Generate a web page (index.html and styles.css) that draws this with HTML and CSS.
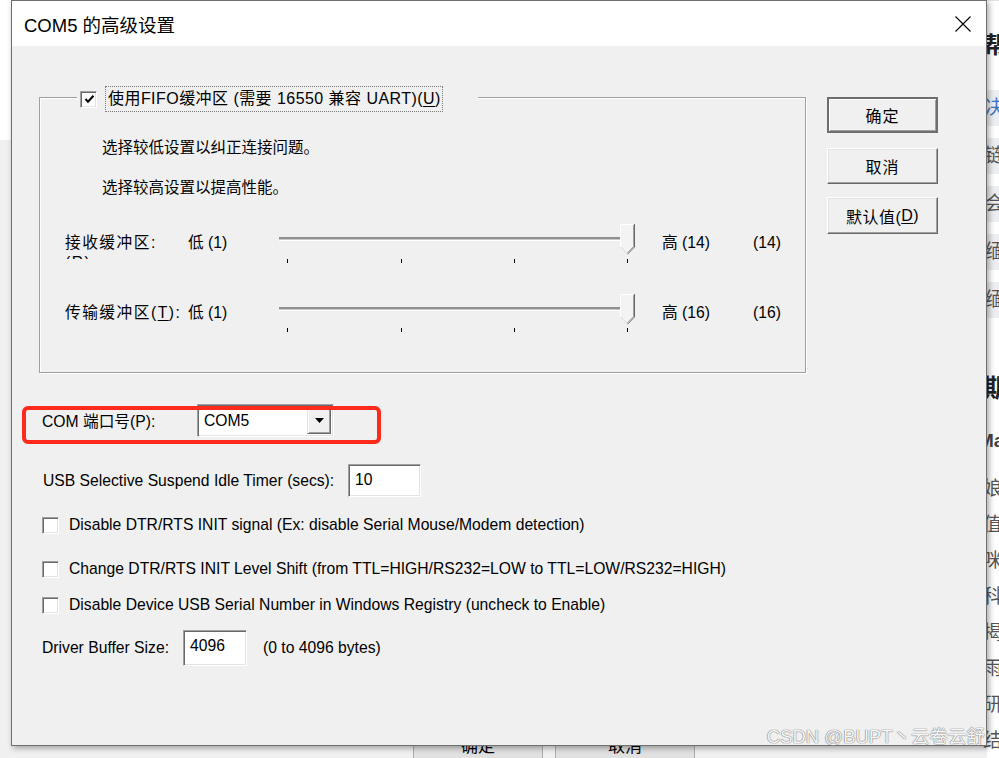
FILE: index.html
```html
<!DOCTYPE html>
<html lang="zh-CN">
<head>
<meta charset="utf-8">
<title>COM5 的高级设置</title>
<link rel="stylesheet" href="styles.css">
</head>
<body>
<div class="screen">
  <div class="behind">
    <div class="behind-main">
      <div class="behind-spacer"></div>
      <div class="behind-buttons">
        <div class="bbtn bbtn-ok">确定</div>
        <div class="bbtn bbtn-cancel">取消</div>
      </div>
    </div>
    <div class="behind-side">
      <div class="side-top"></div>
      <div class="side-h1">帮</div>
      <div class="side-band blue">决</div>
      <div class="side-band">链</div>
      <div class="side-band">会</div>
      <div class="side-band">缅</div>
      <div class="side-band">缅</div>
      <div class="side-sep"></div>
      <div class="side-h2">期</div>
      <div class="side-h3">Ma</div>
      <div class="side-lines">
        <div>娘</div><div>值</div><div>咪</div><div>科</div><div>揭</div><div>雨</div><div>研</div><div>结</div>
      </div>
    </div>
  </div>

  <div class="dialog">
    <div class="titlebar">
      <span class="title">COM5 的高级设置</span>
      <span class="close">
        <svg width="16" height="16" viewBox="0 0 16 16"><path d="M0.5 0.5 L15.5 15.5 M15.5 0.5 L0.5 15.5" stroke="#000" stroke-width="1.1" fill="none"/></svg>
      </span>
    </div>
    <div class="client">
      <div class="top-row">
        <div class="group">
          <div class="legend">
            <span class="check checked">
              <svg width="11" height="11" viewBox="0 0 11 11"><path d="M1.5 5 L4 7.8 L9.5 1.8" stroke="#000" stroke-width="2" fill="none"/></svg>
            </span>
            <span class="legend-text">使用FIFO缓冲区 (需要 16550 兼容 UART)(<u>U</u>)</span>
          </div>
          <div class="hint hint1">选择较低设置以纠正连接问题。</div>
          <div class="hint hint2">选择较高设置以提高性能。</div>
          <div class="slider-row row1">
            <div class="s-label clip"><div>接收缓冲区:</div><div>(<u>R</u>)</div></div>
            <div class="s-low">低 (1)</div>
            <svg class="slider" width="358" height="41" viewBox="0 0 358 41">
              <rect x="0" y="14" width="345" height="2" fill="#8f8f8f"/>
              <rect x="0" y="16" width="345" height="1" fill="#c8c8c8"/>
              <rect x="0" y="17" width="345" height="1" fill="#ffffff"/>
              <rect x="8" y="36" width="1" height="4" fill="#000"/>
              <rect x="122" y="36" width="1" height="4" fill="#000"/>
              <rect x="235" y="36" width="1" height="4" fill="#000"/>
              <rect x="348" y="36" width="1" height="4" fill="#000"/>
              <polygon points="341,1 356,1 356,24 348.5,31.5 341,24" fill="#f3f3f3"/>
              <polyline points="341.5,24 341.5,1.5 355.5,1.5" stroke="#fff" fill="none"/>
              <polyline points="341.5,24 348.5,31" stroke="#d8d8d8" fill="none"/>
              <polyline points="354.5,2 354.5,23.6 348.5,29.6" stroke="#a0a0a0" fill="none"/>
              <polyline points="355.5,1 355.5,24 348.5,31.2" stroke="#696969" fill="none"/>
            </svg>
            <div class="s-high">高 (14)</div>
            <div class="s-cur">(14)</div>
          </div>
          <div class="slider-row row2">
            <div class="s-label">传输缓冲区(<u>T</u>):</div>
            <div class="s-low">低 (1)</div>
            <svg class="slider" width="358" height="41" viewBox="0 0 358 41">
              <rect x="0" y="14" width="345" height="2" fill="#8f8f8f"/>
              <rect x="0" y="16" width="345" height="1" fill="#c8c8c8"/>
              <rect x="0" y="17" width="345" height="1" fill="#ffffff"/>
              <rect x="8" y="35" width="1" height="4" fill="#000"/>
              <rect x="122" y="35" width="1" height="4" fill="#000"/>
              <rect x="235" y="35" width="1" height="4" fill="#000"/>
              <rect x="348" y="35" width="1" height="4" fill="#000"/>
              <polygon points="341,1 356,1 356,24 348.5,31.5 341,24" fill="#f3f3f3"/>
              <polyline points="341.5,24 341.5,1.5 355.5,1.5" stroke="#fff" fill="none"/>
              <polyline points="341.5,24 348.5,31" stroke="#d8d8d8" fill="none"/>
              <polyline points="354.5,2 354.5,23.6 348.5,29.6" stroke="#a0a0a0" fill="none"/>
              <polyline points="355.5,1 355.5,24 348.5,31.2" stroke="#696969" fill="none"/>
            </svg>
            <div class="s-high">高 (16)</div>
            <div class="s-cur">(16)</div>
          </div>
        </div>
        <div class="buttons">
          <div class="btn btn-default">确定</div>
          <div class="btn btn-cancel">取消</div>
          <div class="btn btn-reset">默认值(<u>D</u>)</div>
        </div>
      </div>

      <div class="com-row">
        <div class="com-label">COM 端口号(P):</div>
        <div class="combo">
          <div class="combo-value">COM5</div>
          <div class="combo-arrow">
            <svg width="9" height="5" viewBox="0 0 9 5"><path d="M0 0 H9 L4.5 5 Z" fill="#000"/></svg>
          </div>
        </div>
      </div>

      <div class="usb-row">
        <div class="usb-label">USB Selective Suspend Idle Timer (secs):</div>
        <div class="field field-usb">10</div>
      </div>

      <div class="cb-row cb1">
        <span class="check"></span>
        <span class="cb-text">Disable DTR/RTS INIT signal (Ex: disable Serial Mouse/Modem detection)</span>
      </div>
      <div class="cb-row cb2">
        <span class="check"></span>
        <span class="cb-text">Change DTR/RTS INIT Level Shift (from TTL=HIGH/RS232=LOW to TTL=LOW/RS232=HIGH)</span>
      </div>
      <div class="cb-row cb3">
        <span class="check"></span>
        <span class="cb-text">Disable Device USB Serial Number in Windows Registry (uncheck to Enable)</span>
      </div>

      <div class="buf-row">
        <div class="buf-label">Driver Buffer Size:</div>
        <div class="field field-buf">4096</div>
        <div class="buf-note">(0 to 4096 bytes)</div>
      </div>
    </div>
  </div>

  <div class="red-mark"></div>
  <div class="watermark">CSDN @BUPT丶云卷云舒</div>
</div>
</body>
</html>
```

FILE: styles.css
```css
* { box-sizing: border-box; }

html, body {
  margin: 0;
  padding: 0;
  background: #ffffff;
}

body {
  font-family: "Liberation Sans", "Noto Sans CJK SC", sans-serif;
  font-size: 15.7px;
  color: #000;
}

u { text-decoration: underline; text-underline-offset: 2px; }

.screen {
  position: relative;
  width: 999px;
  height: 758px;
  overflow: hidden;
}

/* ---------- background (behind the dialog) ---------- */
.behind {
  display: flex;
  height: 758px;
}

.behind-main {
  width: 987px;
  display: flex;
  flex-direction: column;
  background: linear-gradient(#ffffff 0, #ffffff 140px, #f0f0f0 140px);
}

.behind-spacer { flex: 1; }

.behind-buttons {
  height: 28px;
  display: flex;
  gap: 12px;
  padding-left: 413px;
  background: #f0f0f0;
}

.bbtn {
  height: 34px;
  line-height: 32px;
  text-align: center;
  font-size: 17px;
  background: #e1e1e1;
  border: 1px solid #adadad;
}

.bbtn-ok { width: 130px; }
.bbtn-cancel { width: 140px; }

.behind-side {
  width: 12px;
  background: #ffffff;
  display: flex;
  flex-direction: column;
  font-size: 19px;
  color: #555;
  white-space: nowrap;
}

.side-top {
  height: 24px;
  border-bottom: 1px solid #e2e2e2;
}

.side-h1 {
  margin-top: 30px;
  height: 28px;
  line-height: 28px;
  font-size: 23px;
  font-weight: bold;
  color: #222;
  margin-left: -3px;
}

.side-h1 + .side-band { margin-top: 31px; }

.side-band {
  height: 36px;
  line-height: 36px;
  margin-bottom: 12px;
  background: #eceef1;
  margin-left: -2px;
}

.side-band.blue { color: #3a73c4; }

.side-sep {
  margin-top: 19px;
  height: 1px;
  background: #e2e2e2;
}

.side-h2 {
  margin-top: 24px;
  height: 30px;
  line-height: 30px;
  font-size: 25px;
  font-weight: bold;
  color: #222;
  margin-left: -4px;
}

.side-h3 {
  margin-top: 28px;
  height: 20px;
  line-height: 20px;
  font-size: 19px;
  font-weight: bold;
  color: #444;
  margin-left: -9px;
}

.side-lines {
  margin-top: 20px;
  line-height: 36px;
  margin-left: -4px;
}

/* ---------- dialog ---------- */
.dialog {
  position: absolute;
  left: 11px;
  top: 0;
  width: 976px;
  height: 746px;
  background: #f0f0f0;
  border: 1px solid #6f6f6f;
  box-shadow: 2px 2px 6px rgba(0, 0, 0, 0.35);
}

.titlebar {
  height: 45px;
  background: #ffffff;
  display: flex;
  align-items: center;
  justify-content: space-between;
  padding-left: 12px;
  padding-right: 15px;
}

.title {
  font-size: 18.5px;
}

.close {
  display: flex;
  padding-top: 1px;
}

.client {
  display: flex;
  flex-direction: column;
}

.top-row {
  display: flex;
  margin-top: 51px;
  margin-left: 27px;
}

/* group box */
.group {
  width: 767px;
  height: 276px;
  border: 1px solid #a0a0a0;
  box-shadow: inset 1px 1px #ffffff, 1px 1px #ffffff;
  display: flex;
  flex-direction: column;
}

.legend {
  margin-top: -12px;
  margin-left: 37px;
  align-self: flex-start;
  height: 26px;
  display: flex;
  align-items: center;
  gap: 8px;
  padding: 0 35px 0 3px;
  background: #f0f0f0;
}

.check {
  width: 17px;
  height: 17px;
  flex: none;
  background: #ffffff;
  border: 1px solid;
  border-color: #a0a0a0 #ffffff #ffffff #a0a0a0;
  box-shadow: inset 1px 1px #696969, inset -1px -1px #e3e3e3;
  display: flex;
  align-items: center;
  justify-content: center;
}

.check.checked svg { margin-left: 1px; margin-top: 1px; }

.legend-text {
  height: 26px;
  line-height: 24px;
  padding: 0 1px 0 2px;
  border: 1px dotted #7a7a7a;
  white-space: nowrap;
  font-size: 16px;
  letter-spacing: 0.45px;
}

.hint {
  margin-left: 62px;
  line-height: 20px;
  height: 20px;
  font-size: 15.5px;
}

.hint1 { margin-top: 26px; }
.hint2 { margin-top: 20px; }

.slider-row {
  display: flex;
  align-items: flex-start;
  height: 41px;
  white-space: nowrap;
}

.row1 { margin-top: 25px; }
.row2 { margin-top: 29px; }

.s-label {
  margin-left: 25px;
  width: 123px;
  padding-top: 10px;
  line-height: 20px;
  letter-spacing: 1.5px;
}

.s-label.clip {
  height: 36px;
  overflow: hidden;
}

.s-low {
  width: 91px;
  padding-top: 10px;
  line-height: 20px;
}

.slider { flex: none; display: block; }

.s-high {
  margin-left: 25px;
  width: 91px;
  padding-top: 10px;
  line-height: 20px;
}

.s-cur {
  padding-top: 10px;
  line-height: 20px;
}

/* buttons */
.buttons {
  margin-left: 21px;
  width: 111px;
  display: flex;
  flex-direction: column;
}

.btn {
  height: 36px;
  display: flex;
  align-items: center;
  justify-content: center;
  font-size: 16px;
  letter-spacing: 1px;
  background: #f0f0f0;
  border: 1px solid;
  border-color: #ffffff #696969 #696969 #ffffff;
  box-shadow: inset -1px -1px #a0a0a0, inset 1px 1px #e3e3e3;
}

.btn-default {
  border: 2px solid #6e6e6e;
  box-shadow: inset 1px 1px #ffffff, inset -1px -1px #a0a0a0;
}

.btn-cancel { margin-top: 15px; }
.btn-reset { margin-top: 13px; height: 37px; letter-spacing: 0.5px; }

/* com row */
.com-row {
  margin-top: 31px;
  margin-left: 30px;
  display: flex;
  align-items: center;
  height: 33px;
}

.com-label { width: 155px; }

.combo {
  width: 137px;
  height: 33px;
  display: flex;
  align-items: stretch;
  background: #ffffff;
  border: 1px solid;
  border-color: #a0a0a0 #ffffff #ffffff #a0a0a0;
  box-shadow: inset 1px 1px #696969, inset -1px -1px #e3e3e3;
  padding: 2px;
}

.combo-value {
  flex: 1;
  padding-left: 4px;
  display: flex;
  align-items: center;
}

.combo-arrow {
  width: 24px;
  display: flex;
  align-items: center;
  justify-content: center;
  background: #f0f0f0;
  border: 1px solid;
  border-color: #e3e3e3 #696969 #696969 #e3e3e3;
  box-shadow: inset 1px 1px #ffffff, inset -1px -1px #a0a0a0;
}

/* usb row */
.usb-row {
  margin-top: 27px;
  margin-left: 31px;
  display: flex;
  align-items: center;
  height: 33px;
}

.usb-label { width: 305px; }

.field {
  background: #ffffff;
  border: 1px solid;
  border-color: #a0a0a0 #ffffff #ffffff #a0a0a0;
  box-shadow: inset 1px 1px #696969, inset -1px -1px #e3e3e3;
  padding-left: 6px;
  line-height: 20px;
}

.field-usb {
  width: 73px;
  height: 33px;
  padding-top: 5px;
}

/* checkbox rows */
.cb-row {
  margin-left: 30px;
  height: 18px;
  display: flex;
  align-items: center;
  gap: 10px;
  white-space: nowrap;
}

.cb1 { margin-top: 19px; }
.cb2 { margin-top: 26px; }
.cb3 { margin-top: 18px; }

/* buffer row */
.buf-row {
  margin-top: 16px;
  margin-left: 30px;
  display: flex;
  align-items: center;
  height: 36px;
}

.buf-label { width: 141px; }

.field-buf {
  width: 64px;
  height: 36px;
  padding-top: 5px;
}

.buf-note { margin-left: 16px; }

/* ---------- overlays ---------- */
.red-mark {
  position: absolute;
  left: 22px;
  top: 406px;
  width: 359px;
  height: 38px;
  border: 4px solid #fe2b1c;
  border-radius: 6px;
}

.watermark {
  position: absolute;
  right: 14px;
  top: 726px;
  font-size: 18.5px;
  line-height: 22px;
  color: #f6f6f6;
  text-shadow: 0 0 1px #6a6a6a, 0 0 1px #6a6a6a;
  white-space: nowrap;
}
```
